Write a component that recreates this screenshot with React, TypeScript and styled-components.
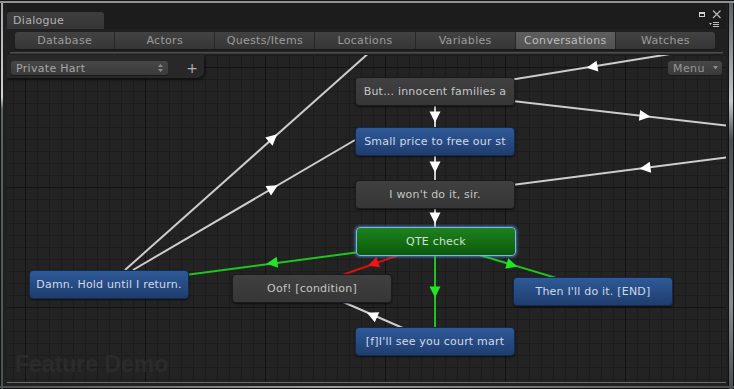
import React from "react";
import styled, { createGlobalStyle, css } from "styled-components";

const GlobalStyle = createGlobalStyle`
  html, body { margin: 0; padding: 0; background: #111; }
  body { font-family: "DejaVu Sans", "Liberation Sans", sans-serif; }
  #root { width: 734px; height: 389px; }
`;

/* canvas origin in page coordinates */
const OX = 7;
const OY = 55;

const Window = styled.div`
  width: 734px;
  height: 389px;
  box-sizing: border-box;
  padding: 3px 6px 3px 3px;
  display: flex;
  background:
    linear-gradient(#161616 0 1px, #8f9192 1px 3px) top left / 100% 3px no-repeat,
    linear-gradient(to bottom, #a4a8aa 0%, #d0d3d5 25%, #5e6466 28%, #4c5254 100%) 1px 0 / 2px 100% no-repeat,
    linear-gradient(to bottom, #5a5e60 0%, #c4c8ca 26%, #4a4e50 36%, #8a8e90 78%, #4a4e50 100%) right 1px top 0 / 4px 100% no-repeat,
    linear-gradient(to right, #4a4e50, #9a9ea0 45%, #4a4e50) left 0 bottom 1px / 100% 2px no-repeat,
    #121212;
`;

const Panel = styled.div`
  flex: 1;
  display: flex;
  flex-direction: column;
  box-sizing: border-box;
  padding: 0 2px 3px 4px;
  background: #202020;
`;

const TabStrip = styled.div`
  height: 26px;
  display: flex;
  align-items: flex-end;
  justify-content: space-between;
  background: #1c1c1c;
`;

const Tab = styled.div`
  width: 97px;
  height: 17px;
  box-sizing: border-box;
  padding-left: 6px;
  border-radius: 3px 3px 0 0;
  background: linear-gradient(#3e3e3e, #363636);
  color: #b2b2b2;
  font-size: 11px;
  letter-spacing: 0.3px;
  line-height: 17px;
`;

const WindowIcons = styled.svg`
  align-self: flex-start;
  margin-top: 6px;
  margin-right: 4px;
`;

const Toolbar = styled.div`
  margin: 3px 0 0 8px;
  width: 700px;
  height: 17px;
  display: flex;
  border-radius: 3px;
  overflow: hidden;
  box-shadow: 0 1px 0 #161616;
`;

const ToolButton = styled.div<{ $active?: boolean }>`
  flex: 1;
  text-align: center;
  font-size: 11px;
  line-height: 17px;
  letter-spacing: 0.3px;
  color: #9c9c9c;
  background: linear-gradient(#424242, #363636);
  border-right: 1px solid #272727;
  &:last-child { border-right: none; }
  ${(p) =>
    p.$active &&
    css`
      color: #bdbdbd;
      background: linear-gradient(#5e5e5e, #525252);
    `}
`;

const Separator = styled.div`
  margin: 3px 3px 0 3px;
  height: 2px;
  background: linear-gradient(#4d4d4d 0 1px, #393939 1px 2px);
`;

const Canvas = styled.div`
  position: relative;
  flex: 1;
  margin-top: 1px;
  overflow: hidden;
  border-bottom: 1px solid #6c7072;
  background-color: #232323;
  background-image:
    linear-gradient(to right, #131313 1px, transparent 1px),
    linear-gradient(to bottom, #131313 1px, transparent 1px),
    linear-gradient(to right, #1c1c1c 1px, transparent 1px),
    linear-gradient(to bottom, #1c1c1c 1px, transparent 1px);
  background-size: 120px 120px, 120px 120px, 12px 12px, 12px 12px;
  background-position: 18px 0, 0 12px, 6px 0, 0 0;
`;

const Watermark = styled.div`
  position: absolute;
  left: 8px;
  top: 296px;
  font-family: "Liberation Sans", Arial, sans-serif;
  font-weight: bold;
  font-size: 23px;
  color: #2b2b2b;
  white-space: nowrap;
`;

const EdgeLayer = styled.svg`
  position: absolute;
  left: 0;
  top: 0;
`;

const OverlayPanel = styled.div`
  position: absolute;
  left: 0;
  top: 0;
  width: 197px;
  height: 23px;
  box-sizing: border-box;
  padding: 6px 0 0 4px;
  display: flex;
  align-items: flex-start;
  background: #282828;
  border-bottom-right-radius: 7px;
  box-shadow: 1px 2px 3px rgba(0, 0, 0, 0.55);
`;

const Dropdown = styled.div`
  width: 157px;
  height: 14px;
  box-sizing: border-box;
  display: flex;
  align-items: center;
  justify-content: space-between;
  padding: 0 5px 0 5px;
  border-radius: 3px;
  background: linear-gradient(#474747, #3a3a3a);
  box-shadow: 0 1px 0 #1a1a1a;
  color: #a6a6a6;
  font-size: 11px;
  letter-spacing: 0.3px;
`;

const PlusButton = styled.div`
  width: 20px;
  margin-left: 14px;
  text-align: center;
  color: #b0b0b0;
  font-size: 14px;
  line-height: 14px;
`;

const MenuButton = styled.div`
  position: absolute;
  right: 4px;
  top: 6px;
  width: 54px;
  height: 14px;
  box-sizing: border-box;
  display: flex;
  align-items: center;
  justify-content: space-between;
  padding: 0 4px 0 5px;
  border-radius: 3px;
  background: linear-gradient(#474747, #3a3a3a);
  box-shadow: 0 1px 0 #1a1a1a;
  color: #969696;
  font-size: 11px;
  letter-spacing: 0.4px;
`;

type Variant = "gray" | "blue" | "green";

const variants = {
  gray: css`
    background: linear-gradient(#404040, #363636);
    border-color: #1c1c1c;
    color: #c6c6c6;
  `,
  blue: css`
    background: linear-gradient(#2e5a98, #1f3d6e);
    border-color: #16294a;
    color: #d0d9e8;
  `,
  green: css`
    background: linear-gradient(#1d821d, #0c5a0c);
    border-color: #0a3a0a;
    color: #cfe4cf;
  `,
};

const Node = styled.div<{ $variant: Variant; $selected?: boolean }>`
  position: absolute;
  width: 160px;
  height: 29px;
  box-sizing: border-box;
  border: 1px solid;
  border-radius: 4px;
  display: flex;
  align-items: center;
  justify-content: center;
  font-size: 11px;
  letter-spacing: 0.2px;
  white-space: nowrap;
  overflow: hidden;
  box-shadow: 0 1px 2px rgba(0, 0, 0, 0.6);
  ${(p) => variants[p.$variant]}
  ${(p) =>
    p.$selected &&
    css`
      border-color: #7fb4e6;
      box-shadow: 0 0 3px 1px rgba(80, 150, 225, 0.75);
    `}
`;

type NodeData = { x: number; y: number; text: string; variant: Variant; selected?: boolean };

const nodes: NodeData[] = [
  { x: 355, y: 77, text: "But... innocent families a", variant: "gray" },
  { x: 355, y: 127, text: "Small price to free our st", variant: "blue" },
  { x: 355, y: 180, text: "I won't do it, sir.", variant: "gray" },
  { x: 356, y: 227, text: "QTE check", variant: "green", selected: true },
  { x: 29, y: 270, text: "Damn. Hold until I return.", variant: "blue" },
  { x: 232, y: 274, text: "Oof! [condition]", variant: "gray" },
  { x: 513, y: 277, text: "Then I'll do it. [END]", variant: "blue" },
  { x: 355, y: 327, text: "[f]I'll see you court mart", variant: "blue" },
];

type P = [number, number];
type Edge = { a: P; b: P; arrow: P; toward: P; color: "white" | "green" | "red" };

const edges: Edge[] = [
  { a: [125, 270], b: [380, 43], arrow: [273, 138], toward: [380, 43], color: "white" },
  { a: [133, 270], b: [355, 140], arrow: [273, 188], toward: [355, 140], color: "white" },
  { a: [435, 92], b: [800, 33], arrow: [592, 67], toward: [435, 92], color: "white" },
  { a: [435, 92], b: [800, 134], arrow: [645, 116], toward: [800, 134], color: "white" },
  { a: [435, 195], b: [800, 148], arrow: [645, 168], toward: [435, 195], color: "white" },
  { a: [435, 92], b: [435, 141], arrow: [435, 117], toward: [435, 141], color: "white" },
  { a: [435, 141], b: [435, 195], arrow: [435, 167], toward: [435, 195], color: "white" },
  { a: [435, 195], b: [435, 242], arrow: [435, 218], toward: [435, 242], color: "white" },
  { a: [311, 288], b: [435, 342], arrow: [372, 315], toward: [311, 288], color: "white" },
  { a: [436, 242], b: [109, 285], arrow: [272, 263], toward: [109, 285], color: "green" },
  { a: [435, 242], b: [435, 342], arrow: [435, 292], toward: [435, 342], color: "green" },
  { a: [436, 242], b: [593, 289], arrow: [512, 265], toward: [593, 289], color: "green" },
  { a: [436, 242], b: [311, 286], arrow: [373, 264], toward: [311, 286], color: "red" },
];

const lineColor = { white: "#cdcdcd", green: "#1fc41f", red: "#d81010" };
const headColor = { white: "#ffffff", green: "#22e622", red: "#f01414" };

function arrowPoints(at: P, toward: P): string {
  const dx = toward[0] - at[0];
  const dy = toward[1] - at[1];
  const len = Math.hypot(dx, dy) || 1;
  const ux = dx / len;
  const uy = dy / len;
  const px = -uy;
  const py = ux;
  const h = 5.5;
  const w = 5.5;
  const tip: P = [at[0] + ux * h, at[1] + uy * h];
  const b1: P = [at[0] - ux * h + px * w, at[1] - uy * h + py * w];
  const b2: P = [at[0] - ux * h - px * w, at[1] - uy * h - py * w];
  return [tip, b1, b2].map((p) => p.map((v) => v.toFixed(2)).join(",")).join(" ");
}

const Edges: React.FC = () => (
  <EdgeLayer width={719} height={327} viewBox={`${OX} ${OY} 719 327`}>
    {edges.map((e, i) => (
      <line
        key={`l${i}`}
        x1={e.a[0]}
        y1={e.a[1]}
        x2={e.b[0]}
        y2={e.b[1]}
        stroke={lineColor[e.color]}
        strokeWidth={2}
      />
    ))}
    {edges.map((e, i) => (
      <polygon key={`a${i}`} points={arrowPoints(e.arrow, e.toward)} fill={headColor[e.color]} />
    ))}
  </EdgeLayer>
);

const tabs = ["Database", "Actors", "Quests/Items", "Locations", "Variables", "Conversations", "Watches"];

export default function App() {
  return (
    <>
      <GlobalStyle />
      <Window>
        <Panel>
          <TabStrip>
            <Tab>Dialogue</Tab>
            <WindowIcons width={24} height={20} viewBox="0 0 24 20">
              {/* maximize */}
              <rect x={1.5} y={3.5} width={5} height={4} fill="none" stroke="#cfcfcf" strokeWidth={1} />
              <rect x={1} y={3} width={6} height={2} fill="#cfcfcf" />
              {/* close */}
              <path d="M15 1.5 L22.5 9 M22.5 1.5 L15 9" stroke="#bdbdbd" strokeWidth={1.1} />
              {/* menu */}
              <path d="M11 14 L14 14 L12.5 16 Z" fill="#bdbdbd" />
              <path d="M15 13.5 H21 M15 15.5 H21 M15 17.5 H21" stroke="#bdbdbd" strokeWidth={1} />
            </WindowIcons>
          </TabStrip>
          <Toolbar>
            {tabs.map((t) => (
              <ToolButton key={t} $active={t === "Conversations"}>
                {t}
              </ToolButton>
            ))}
          </Toolbar>
          <Separator />
          <Canvas>
            <Watermark>Feature Demo</Watermark>
            <Edges />
            {nodes.map((n) => (
              <Node
                key={n.text}
                $variant={n.variant}
                $selected={n.selected}
                style={{ left: n.x - OX, top: n.y - OY }}
              >
                {n.text}
              </Node>
            ))}
            <OverlayPanel>
              <Dropdown>
                <span>Private Hart</span>
                <svg width={5} height={8} viewBox="0 0 5 8">
                  <path d="M2.5 0 L5 3 L0 3 Z M0 5 L5 5 L2.5 8 Z" fill="#8a8a8a" />
                </svg>
              </Dropdown>
              <PlusButton>+</PlusButton>
            </OverlayPanel>
            <MenuButton>
              <span>Menu</span>
              <svg width={5} height={4} viewBox="0 0 5 4">
                <path d="M0 0 L5 0 L2.5 3.5 Z" fill="#8a8a8a" />
              </svg>
            </MenuButton>
          </Canvas>
        </Panel>
      </Window>
    </>
  );
}
